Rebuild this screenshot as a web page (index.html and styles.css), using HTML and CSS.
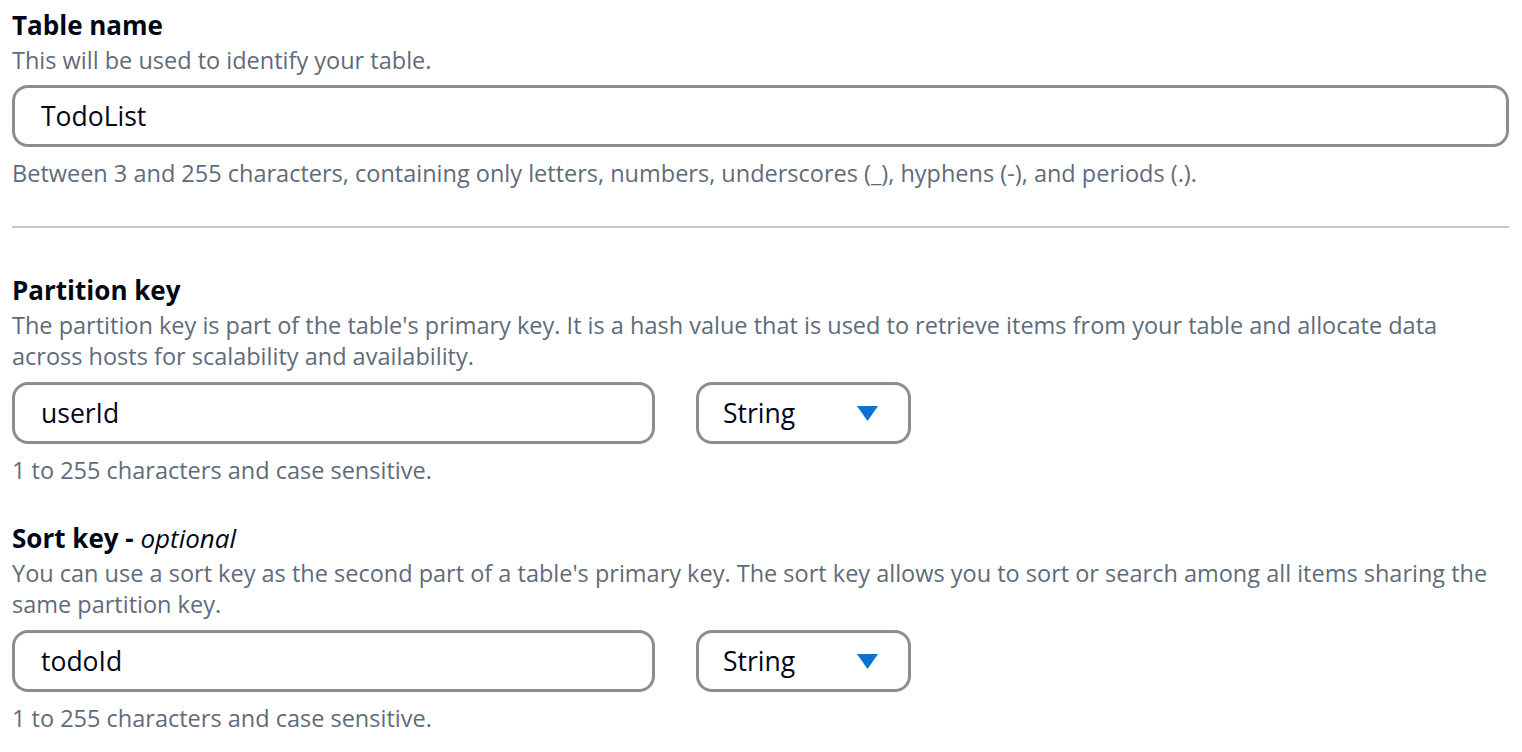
FILE: index.html
```html
<!DOCTYPE html>
<html lang="en">
<head>
  <meta charset="UTF-8" />
  <meta name="viewport" content="width=device-width, initial-scale=1.0" />
  <title>Create table</title>
  <link rel="stylesheet" href="styles.css">
</head>
<body>
  <div class="form">
    <div class="field">
      <div class="label">Table name</div>
      <div class="description">This will be used to identify your table.</div>
      <div class="input-box wide">TodoList</div>
      <div class="constraint">Between 3 and 255 characters, containing only letters, numbers, underscores (_), hyphens (-), and periods (.).</div>
    </div>

    <hr class="divider">

    <div class="field">
      <div class="label">Partition key</div>
      <div class="description">The partition key is part of the table's primary key. It is a hash value that is used to retrieve items from your table and allocate data across hosts for scalability and availability.</div>
      <div class="key-row">
        <div class="input-box">userId</div>
        <div class="select-box">
          <span>String</span>
          <svg class="caret" width="21" height="16" viewBox="0 0 21 16"><polygon points="0,0 21,0 10.5,15" fill="#0972d3"/></svg>
        </div>
      </div>
      <div class="constraint">1 to 255 characters and case sensitive.</div>
    </div>

    <div class="field sort">
      <div class="label">Sort key - <i>optional</i></div>
      <div class="description">You can use a sort key as the second part of a table's primary key. The sort key allows you to sort or search among all items sharing the same partition key.</div>
      <div class="key-row">
        <div class="input-box">todoId</div>
        <div class="select-box">
          <span>String</span>
          <svg class="caret" width="21" height="16" viewBox="0 0 21 16"><polygon points="0,0 21,0 10.5,15" fill="#0972d3"/></svg>
        </div>
      </div>
      <div class="constraint">1 to 255 characters and case sensitive.</div>
    </div>
  </div>
</body>
</html>
```

FILE: styles.css
```css
body {
  margin: 0;
  padding: 0;
  background: #fff;
  font-family: 'Open Sans', 'Noto Sans', sans-serif;
  color: #000716;
}
.form {
  padding: 9px 13px 0 12px;
}
.field {
  display: flex;
  flex-direction: column;
}
.label {
  font-size: 26px;
  font-weight: 700;
  line-height: 32px;
}
.label i {
  font-weight: 400;
}
.description {
  margin-top: 4px;
  font-size: 23.5px;
  line-height: 31px;
  color: #5f6b7a;
}
.input-box,
.select-box {
  box-sizing: border-box;
  height: 62px;
  border: 3px solid #8c8c94;
  border-radius: 16px;
  font-size: 26.5px;
  display: flex;
  align-items: center;
  padding: 0 26px;
}
.input-box.wide {
  margin-top: 9px;
}
.key-row {
  margin-top: 10px;
  display: grid;
  grid-template-columns: 643px 215px;
  gap: 41px;
}
.select-box {
  justify-content: space-between;
  padding: 0 30px 0 24px;
}
.caret {
  display: block;
  margin-top: 2px;
}
.constraint {
  margin-top: 11px;
  font-size: 23.5px;
  line-height: 31px;
  color: #5f6b7a;
}
.divider {
  border: none;
  border-top: 2px solid #c6c6cd;
  margin: 37px 0 46px;
}
.sort {
  margin-top: 36px;
}
```
